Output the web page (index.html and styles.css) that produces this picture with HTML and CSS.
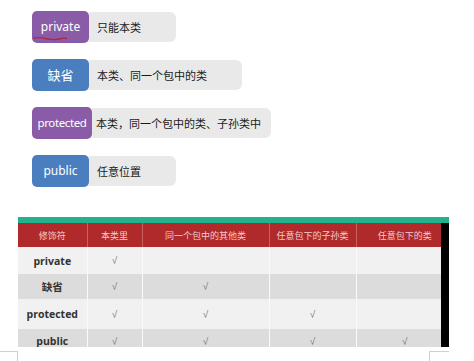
FILE: index.html
```html
<!DOCTYPE html>
<html lang="zh">
<head>
<meta charset="utf-8">
<link rel="stylesheet" href="styles.css">
</head>
<body>
<div class="cards">
  <div class="row">
    <div class="badge purple">private<svg class="squiggle" width="34" height="5" viewBox="0 0 34 5"><path d="M0 2.5 C4 1 8 1.5 12 2.5 S22 4 26 3 S32 2 34 2.5" fill="none" stroke="#b0283a" stroke-width="1.3"/></svg></div>
    <div class="desc">只能本类</div>
  </div>
  <div class="row">
    <div class="badge blue zh">缺省</div>
    <div class="desc">本类、同一个包中的类</div>
  </div>
  <div class="row">
    <div class="badge purple wide">protected</div>
    <div class="desc tight">本类，同一个包中的类、子孙类中</div>
  </div>
  <div class="row">
    <div class="badge blue">public</div>
    <div class="desc">任意位置</div>
  </div>
</div>

<div class="table-area">
  <div class="green-bar"></div>
  <div class="table-clip">
    <table class="access">
      <colgroup>
        <col class="c1"><col class="c2"><col class="c3"><col class="c4"><col class="c5">
      </colgroup>
      <thead>
        <tr><th>修饰符</th><th>本类里</th><th>同一个包中的其他类</th><th>任意包下的子孙类</th><th class="last">任意包下的类</th></tr>
      </thead>
      <tbody>
        <tr class="r1 light"><td class="label">private</td><td>√</td><td></td><td></td><td></td></tr>
        <tr class="r2 dark"><td class="label">缺省</td><td>√</td><td>√</td><td></td><td></td></tr>
        <tr class="r3 light"><td class="label">protected</td><td>√</td><td>√</td><td>√</td><td></td></tr>
        <tr class="r4 dark"><td class="label">public</td><td>√</td><td>√</td><td>√</td><td class="last">√</td></tr>
      </tbody>
    </table>
    <div class="black-bar"></div>
  </div>
  <div class="marks">
    <div class="mark-left"></div>
    <div class="mark-mid"></div>
    <div class="mark-right"></div>
  </div>
</div>
</body>
</html>
```

FILE: styles.css
```css
html, body {
  margin: 0;
  padding: 0;
  background: #ffffff;
}
body {
  width: 474px;
  height: 361px;
  overflow: hidden;
  font-family: "Noto Sans", "Noto Sans CJK SC", sans-serif;
}
.cards {
  display: flex;
  flex-direction: column;
  gap: 16px;
  padding: 11px 0 0 32px;
}
.row {
  display: flex;
  align-items: center;
  height: 32px;
}
.badge {
  position: relative;
  z-index: 1;
  height: 32px;
  min-width: 57px;
  box-sizing: border-box;
  border-radius: 5px;
  color: #ffffff;
  font-size: 12px;
  display: flex;
  align-items: center;
  justify-content: center;
  padding-bottom: 1px;
}
.badge.wide {
  min-width: 60px;
  padding: 0 2px 1px;
  font-size: 11.5px;
  letter-spacing: -0.4px;
}
.badge.zh {
  font-size: 13px;
  font-family: "Noto Sans CJK SC", sans-serif;
}
.purple { background: #8a5ca7; }
.blue { background: #4a7ebe; }
.squiggle {
  position: absolute;
  left: 1px;
  top: 25px;
}
.desc {
  height: 30px;
  display: flex;
  align-items: center;
  background: #e9e9e9;
  border-radius: 0 6px 6px 0;
  padding: 0 35px 0 8px;
  font-family: "Noto Sans CJK SC", sans-serif;
  font-size: 11px;
  color: #1a1a1a;
}
.desc.tight {
  padding: 0 10px 0 4px;
}
.table-area {
  margin-top: 30px;
  margin-left: 18px;
  width: 431px;
  position: relative;
}
.green-bar {
  height: 6px;
  background: #20b38c;
}
.table-clip {
  position: relative;
  height: 124px;
  overflow: hidden;
}
.access {
  width: 431px;
  border-collapse: collapse;
  table-layout: fixed;
  font-family: "Noto Sans CJK SC", sans-serif;
}
.c1 { width: 69px; }
.c2 { width: 55px; }
.c3 { width: 127px; }
.c4 { width: 87px; }
.c5 { width: 93px; }
.access th {
  height: 24px;
  padding: 0;
  background: #b0292b;
  color: #f2cccc;
  font-size: 9px;
  font-weight: normal;
  text-align: center;
  border-left: 1px solid #c8605f;
}
.access th:first-child,
.access td:first-child {
  border-left: none;
}
.access td {
  padding: 0;
  text-align: center;
  font-family: "Liberation Sans", sans-serif;
  font-size: 10px;
  color: #777;
  border-left: 1px solid #fafafa;
}
.access th.last,
.access td.last {
  padding-left: 4px;
}
.access td.label {
  font-family: "Open Sans", "Noto Sans CJK SC", sans-serif;
  font-weight: bold;
  font-size: 10.5px;
  color: #333;
}
.r1 { height: 27px; }
.r2 { height: 25px; }
.r3 { height: 30px; }
.r4 { height: 24px; }
.light td { background: #f1f1f1; }
.dark td { background: #dcdcdc; }
.black-bar {
  position: absolute;
  right: 0;
  top: 0;
  bottom: 0;
  width: 8px;
  background: #000000;
}
.marks {
  display: flex;
  margin-top: 4px;
  margin-left: -18px;
  height: 10px;
}
.mark-left {
  width: 18px;
  border-top: 1px solid #cfcfcf;
}
.mark-mid {
  width: 430px;
  border-left: 1px solid #cfcfcf;
  border-right: 1px solid #cfcfcf;
  box-sizing: border-box;
}
.mark-right {
  width: 20px;
  border-top: 1px solid #cfcfcf;
}
```
